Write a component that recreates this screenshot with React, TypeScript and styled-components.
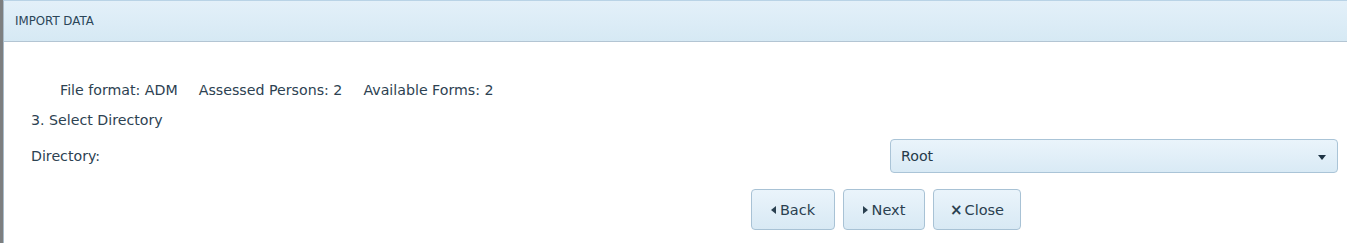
import styled, { createGlobalStyle } from "styled-components";

const GlobalStyle = createGlobalStyle`
  html, body {
    margin: 0;
    padding: 0;
    background: #7d7f80;
    overflow: hidden;
  }
  body {
    font-family: "DejaVu Sans", "Liberation Sans", sans-serif;
    color: #2d4252;
  }
`;

const Dialog = styled.div`
  margin-left: 3px;
  width: 1360px;
  height: 243px;
  background: #ffffff;
  border-left: 1px solid #a9bccb;
  border-top: 1px solid #b9d3e6;
  box-sizing: border-box;
`;

const Header = styled.div`
  height: 40px;
  display: flex;
  align-items: center;
  padding-left: 11px;
  background: linear-gradient(#e3f0f9, #d6e9f4);
  border-bottom: 1px solid #b3c5d3;
  font-size: 11.8px;
  color: #2b4558;
`;

const Body = styled.div`
  padding: 37px 0 0 27px;
  font-size: 14.2px;
`;

const Stats = styled.div`
  display: flex;
  gap: 21px;
  padding-left: 29px;
  height: 22px;
  align-items: center;
`;

const Step = styled.div`
  height: 38px;
  display: flex;
  align-items: center;
`;

const FieldRow = styled.div`
  display: flex;
  align-items: center;
  height: 34px;
`;

const Label = styled.div`
  width: 859px;
`;

const Select = styled.div`
  width: 448px;
  height: 34px;
  box-sizing: border-box;
  display: flex;
  align-items: center;
  justify-content: space-between;
  padding: 0 11px 0 10px;
  border: 1px solid #aac4d7;
  border-radius: 4px;
  background: linear-gradient(#eaf4fb, #d9eaf5);
  color: #263a49;
`;

const Caret = styled.span`
  width: 0;
  height: 0;
  border-left: 4px solid transparent;
  border-right: 4px solid transparent;
  border-top: 5px solid #1e3344;
  margin-top: 2px;
`;

const Buttons = styled.div`
  display: flex;
  gap: 8px;
  margin-top: 16px;
  padding-left: 720px;
`;

const Button = styled.button<{ $w: number }>`
  width: ${(p) => p.$w}px;
  height: 41px;
  box-sizing: border-box;
  display: flex;
  align-items: center;
  justify-content: center;
  gap: 4px;
  border: 1px solid #a8c2d5;
  border-radius: 4px;
  background: linear-gradient(#eaf4fb, #d8e9f4);
  font-family: "DejaVu Sans", "Liberation Sans", sans-serif;
  font-size: 14.5px;
  color: #2a4050;
  padding: 0;
`;

const Tri = styled.span<{ $dir: "left" | "right" }>`
  width: 0;
  height: 0;
  border-top: 4px solid transparent;
  border-bottom: 4px solid transparent;
  ${(p) =>
    p.$dir === "left"
      ? "border-right: 5px solid #2a4050;"
      : "border-left: 5px solid #2a4050;"}
`;

const XMark = styled.span`
  font-size: 15px;
  font-weight: bold;
  margin-right: -2px;
`;

export default function App() {
  return (
    <>
      <GlobalStyle />
      <Dialog>
        <Header>IMPORT DATA</Header>
        <Body>
          <Stats>
            <span>File format: ADM</span>
            <span>Assessed Persons: 2</span>
            <span>Available Forms: 2</span>
          </Stats>
          <Step>3. Select Directory</Step>
          <FieldRow>
            <Label>Directory:</Label>
            <Select>
              <span>Root</span>
              <Caret />
            </Select>
          </FieldRow>
          <Buttons>
            <Button $w={84}>
              <Tri $dir="left" />
              Back
            </Button>
            <Button $w={82}>
              <Tri $dir="right" />
              Next
            </Button>
            <Button $w={88}>
              <XMark>×</XMark>
              Close
            </Button>
          </Buttons>
        </Body>
      </Dialog>
    </>
  );
}
